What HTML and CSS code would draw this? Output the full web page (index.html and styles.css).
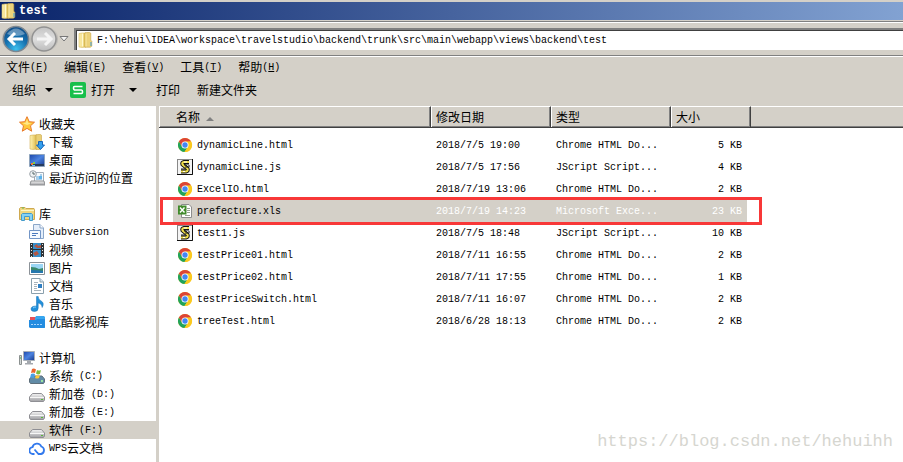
FILE: index.html
```html
<!DOCTYPE html>
<html lang="zh-CN">
<head>
    <meta charset="utf-8">
    <title>test</title>
    <meta name="viewport" content="width=device-width, initial-scale=1">
    <link rel="stylesheet" href="styles.css">
</head>
<body>
    <!-- shared icons -->
    <svg class="sprite" aria-hidden="true">
        <defs>
            <linearGradient id="gold" x1="0" x2="1"><stop offset="0" stop-color="#fff3b4"/><stop offset=".5" stop-color="#efd67c"/><stop offset="1" stop-color="#d9b544"/></linearGradient>
            <linearGradient id="steel" x1="0" y1="0" x2="0" y2="1"><stop offset="0" stop-color="#f4f4f4"/><stop offset="1" stop-color="#a0a0a4"/></linearGradient>
            <linearGradient id="sky" x1="0" y1="0" x2="1" y2="1"><stop offset="0" stop-color="#1c46a8"/><stop offset=".5" stop-color="#4c83e0"/><stop offset="1" stop-color="#16368a"/></linearGradient>
            <radialGradient id="blueball" cx=".5" cy=".9" r=".9"><stop offset="0" stop-color="#3fc0ee"/><stop offset=".5" stop-color="#1672b0"/><stop offset="1" stop-color="#0d4a86"/></radialGradient>
            <linearGradient id="greyball" x1="0" y1="0" x2="0" y2="1"><stop offset="0" stop-color="#c4c4c4"/><stop offset=".5" stop-color="#dedede"/><stop offset="1" stop-color="#bcbcbc"/></linearGradient>
        </defs>
        <symbol id="folder" viewBox="0 0 16 16">
            <path d="M1 1.500L4 1h4v14l-4 .5-3-.5z" fill="url(#gold)" stroke="#dcc069" stroke-width=".6"/>
            <path d="M7 .8l4.500-.5 1.300.9v7l1 1v5l-1.500 1H7z" fill="#ecd27a" stroke="#c9a545" stroke-width=".6"/>
            <path d="M4.500 1.500v13" stroke="#fff8d0" stroke-width="1.500"/>
            <path d="M8 1.500v13" stroke="#f8e8a6"/>
            <path d="M13 10v4" stroke="#3a9bd8"/>
        </symbol>
        <symbol id="star" viewBox="0 0 16 16">
            <path d="M8 .7l2.200 5 5.300.5-4 3.600 1.200 5.400L8 12.400l-4.700 2.800 1.200-5.400-4-3.600 5.300-.5z" fill="#ffc83c" stroke="#e8792b"/>
            <path d="M8 3l1.300 4 3.200.2L8 9 3.500 7l3.200-.2z" fill="#ffe889"/>
        </symbol>
        <symbol id="download" viewBox="0 0 16 16">
            <path d="M1 1.500L4 1h4v14l-4 .5-3-.5z" fill="url(#gold)" stroke="#d3b050" stroke-width=".6"/>
            <path d="M7 .8l4-.5 1.500.9v13L11 15.500H7z" fill="#e9cf76" stroke="#c9a545" stroke-width=".6"/>
            <path d="M9.500 7.500h4V11h2L11.500 15.500 7.500 11h2z" fill="#35a0ee" stroke="#1765b8"/>
        </symbol>
        <symbol id="desktop" viewBox="0 0 16 16">
            <path d="M.5 2.500h15v12H.5z" fill="url(#sky)" stroke="#8fa4bd"/>
            <path d="M1 12h14v2H1z" fill="#273c5e"/>
            <path d="M2 11h2v2H2z" fill="#f27a35"/><path d="M4 10h2v2H4z" fill="#82ce45"/><path d="M3 13h3v1H3z" fill="#61c5ff"/>
        </symbol>
        <symbol id="recent" viewBox="0 0 16 16">
            <path d="M5.500 2.500h9v9h-9z" fill="#f7fafc" stroke="#a3adb8"/>
            <path d="M2 11h13l1 4H1z" fill="url(#steel)" stroke="#8d8f92"/>
            <path d="M7 7h3M11 5h2M7 9h6" stroke="#58a2d8"/><path d="M10 6h3v3h-3z" fill="#5ab2ec"/>
            <circle cx="4" cy="4" r="3.300" fill="#eef2f4" stroke="#9aa1a8"/><path d="M4 2v2h2" fill="none" stroke="#566"/>
        </symbol>
        <symbol id="library" viewBox="0 0 16 16">
            <path d="M.5 13.500v-11l1-1H6l1 1h8l.5 1v10z" fill="#f0d780" stroke="#cfa950"/>
            <path d="M2 4.500h13" stroke="#fff6c4"/><path d="M3 2h2" stroke="#62b957"/>
            <path d="M2.500 14.500V8.500l1-1h9l1 1v6h-3v-4h-5v4z" fill="#85d2f5" stroke="#459bc9"/>
        </symbol>
        <symbol id="svn" viewBox="0 0 16 16">
            <path d="M4.500.5H11L14.500 4v10.500h-10z" fill="#e4eefa" stroke="#8ba6c8"/>
            <path d="M11 .5V4h3.500" fill="#fff" stroke="#8ba6c8"/>
            <path d="M.5 6.500h11v8H.5z" fill="#f6faff" stroke="#7295c6"/>
            <path d="M3 9.500h6M3 11.500h4" stroke="#4b79bd"/>
        </symbol>
        <symbol id="video" viewBox="0 0 16 16">
            <path d="M1 1h14v14H1z" fill="#303437"/>
            <path d="M4 1h8v6H4zM4 8h8v7H4z" fill="#378fcb"/>
            <path d="M5 4l3-2 1 2 3-1v3L8 6zM4 11l4-2 2 3-4 2z" fill="#b65742"/>
            <path d="M2.500 2v13M13.500 2v13" stroke="#e6e6e6" stroke-dasharray="1 2"/>
        </symbol>
        <symbol id="photo" viewBox="0 0 16 16">
            <path d="M.5 2.500h15v12H.5z" fill="#fff" stroke="#8c9298"/>
            <path d="M2 4h12v9H2z" fill="#9bd6f5"/><path d="M2 7q5 0 8 2l4-1v3H2z" fill="#39886c"/><path d="M2 10q7 0 12 1v2H2z" fill="#2677ae"/>
        </symbol>
        <symbol id="doc" viewBox="0 0 16 16">
            <path d="M2.500.5H11L14.500 4v11.500h-12z" fill="#fff" stroke="#8ba0ad"/>
            <path d="M11 .5V4h3.500" fill="#d4e5f1" stroke="#8ba0ad"/>
            <path d="M5 4.500h4M5 6.500h3M5 8.500h3M5 10.500h3M5 12.500h7" stroke="#a8b3bb"/><path d="M9 6h4v4H9z" fill="#307fc3"/>
        </symbol>
        <symbol id="music" viewBox="0 0 16 16">
            <path d="M7.500.5h1.700q0 3 3 4.500 3.500 2 1 6.500Q13 7.500 9.200 7v5q0 3.500-3.700 3.500-3.500 0-3.500-2.500 0-3 5.500-3z" fill="#2190db" stroke="#1670b5" stroke-width=".5"/>
            <path d="M4 12q1-1 3-1" stroke="#86d2ff" fill="none"/>
        </symbol>
        <symbol id="youku" viewBox="0 0 16 16">
            <path d="M1 3h7v6H1z" fill="#e3515a"/>
            <path d="M6 4l1-2h8l1 1v11H6z" fill="#37a6ef"/>
            <path d="M0 6h7l1-1h8v8l-1 1H1l-1-1z" fill="#238ce0"/>
            <path d="M2 10.500h12" stroke="#a4d5ff" stroke-dasharray="2 1"/>
        </symbol>
        <symbol id="computer" viewBox="0 0 16 16">
            <path d="M4.500 1.500h11v9h-11z" fill="url(#sky)" stroke="#aab0b8"/>
            <path d="M8 11h4v2h2v1.500H6V13h2z" fill="#a4a8ae"/>
            <path d="M.5 5.500h2v9h-2z" fill="#d4d8d8" stroke="#8b9190"/><path d="M1 8h1" stroke="#38b638"/>
        </symbol>
        <symbol id="disk" viewBox="0 0 16 16">
            <path d="M3.500 7.500h9l3 3.500v3l-1 1.500h-13l-1-1.500v-3z" fill="url(#steel)" stroke="#8f8f94"/>
            <path d="M1 11.500h14" stroke="#f7f7f7"/><path d="M12 13h2v1h-2z" fill="#58b838"/>
        </symbol>
        <symbol id="sysdisk" viewBox="0 0 16 16">
            <path d="M3 8h10l2.500 3v3l-1 1.500h-13l-1-1.500v-3z" fill="#628ba6" stroke="#5e6f7b"/>
            <path d="M3 1q2-1 4 .5L6 5Q4 4 2 5z" fill="#e9652d"/><path d="M8 2q2 1 4 0l-1 4q-2 1-4-.5z" fill="#7dbc3b"/>
            <path d="M2 6q2-1 4 0L5 10Q3 9 1 10z" fill="#48a0e6"/><path d="M7 7q2 1 4 0l-1 3q-2 1-4 0z" fill="#ffc936"/>
            <path d="M12 12h2v2h-2z" fill="#98e4a1"/>
        </symbol>
        <symbol id="cloud" viewBox="0 0 16 16">
            <path d="M5.500 14H4A3.400 3.400 0 0 1 3.500 7.200 4.600 4.600 0 0 1 12.300 6.500 3.900 3.900 0 0 1 12 14H9.500L5.500 9.500" fill="none" stroke="#3279ed" stroke-width="1.800"/>
        </symbol>
        <symbol id="chrome" viewBox="0 0 16 16">
            <circle cx="8" cy="8" r="7" fill="#fbc91e"/>
            <path d="M1.900 4.500A7 7 0 0 1 14.100 4.500L8 5 5 9.700z" fill="#dc4437"/>
            <path d="M1.900 4.500A7 7 0 0 0 7.500 15L11 9.700 5 9.700z" fill="#20a35b"/>
            <path d="M14.100 4.500H8l3 5.200L7.500 15A7 7 0 0 0 14.100 4.500z" fill="#fbc91e"/>
            <circle cx="8" cy="8" r="3.500" fill="#fff"/><circle cx="8" cy="8" r="2.700" fill="#4286f4"/>
        </symbol>
        <symbol id="script" viewBox="0 0 16 16">
            <path d="M0 0h16v16H0z" fill="#888"/><path d="M1 1h14v14H1z" fill="#f4f4f4"/><path d="M15.500 0v15.500H0" fill="none" stroke="#111"/>
            <path d="M12 3H7Q4.500 3.500 5.500 5.500L10.500 9.500Q11.500 12 9 12.500H4" fill="none" stroke="#111" stroke-width="4"/>
            <path d="M12 3H7Q4.500 3.500 5.500 5.500L10.500 9.500Q11.500 12 9 12.500H4" fill="none" stroke="#f2e04c" stroke-width="2"/>
            <path d="M7 3h3M6 12.500h2" stroke="#fff"/>
            <path d="M10 5h2M7 6h3M8 8h3M4 10h4M11 7h2" stroke="#111"/>
        </symbol>
        <symbol id="excel" viewBox="0 0 16 16">
            <path d="M4.500 1.500h7.500l2.500 2.500v10.500h-10z" fill="#fff" stroke="#8d8d8d"/>
            <path d="M10 5.500h3M10 7.500h3M10 9.500h3M8 12.500h5" stroke="#97a292"/>
            <path d="M1 2.500h8.500v9H1z" fill="#418b2b"/><path d="M3 4.500l4.500 5M7.500 4.500L3 9.500" stroke="#fff" stroke-width="1.400"/>
        </symbol>
    </svg>

    <header class="titlebar">
        <svg class="icon"><use href="#folder"/></svg>
        <h1>test</h1>
    </header>

    <div class="navbar">
        <div class="history">
            <button type="button" aria-label="后退">
                <svg viewBox="0 0 28 28"><circle cx="14" cy="14" r="12.500" fill="url(#blueball)" stroke="#7d8790" stroke-width="1.500"/><path d="M5 9Q14-2 23 9 14 13 5 9z" fill="#fff" opacity=".35"/><path d="M13 8l-6 6 6 6M8 14h13" fill="none" stroke="#fff" stroke-width="3"/></svg>
            </button>
            <button type="button" aria-label="前进">
                <svg viewBox="0 0 28 28"><circle cx="14" cy="14" r="12" fill="url(#greyball)" stroke="#929292" stroke-width="1.500"/><path d="M15 8l6 6-6 6M20 14H7" fill="none" stroke="#f4f4f4" stroke-width="3"/></svg>
            </button>
        </div>
        <button type="button" class="recent" aria-label="最近的页面">
            <svg viewBox="0 0 10 8"><path d="M1 1.500h8L5 6z" fill="#f4f4f4" stroke="#777"/></svg>
        </button>
        <label class="address">
            <svg class="icon"><use href="#folder"/></svg>
            <input type="text" aria-label="地址" value="F:\hehui\IDEA\workspace\travelstudio\backend\trunk\src\main\webapp\views\backend\test">
        </label>
    </div>

    <nav class="menubar">
        <button type="button">文件<span class="en">(<u>F</u>)</span></button>
        <button type="button">编辑<span class="en">(<u>E</u>)</span></button>
        <button type="button">查看<span class="en">(<u>V</u>)</span></button>
        <button type="button">工具<span class="en">(<u>T</u>)</span></button>
        <button type="button">帮助<span class="en">(<u>H</u>)</span></button>
    </nav>

    <div class="toolbar">
        <button type="button">组织<i class="caret"></i></button>
        <button type="button" class="open">
            <svg class="icon" viewBox="0 0 16 16"><rect width="16" height="16" rx="2" fill="#18bf4b"/><path d="M12.500 4.500h-8Q3.500 4.500 3.500 6t1 2h7q1 0 1 1.800t-1 1.700h-8" fill="none" stroke="#fff" stroke-width="1.600"/></svg>
            打开<i class="caret"></i>
        </button>
        <button type="button">打印</button>
        <button type="button">新建文件夹</button>
    </div>

    <div class="explorer">
        <aside class="sidebar">
            <section>
                <a href="#" class="root"><svg class="icon"><use href="#star"/></svg>收藏夹</a>
                <a href="#"><svg class="icon"><use href="#download"/></svg>下载</a>
                <a href="#"><svg class="icon"><use href="#desktop"/></svg>桌面</a>
                <a href="#"><svg class="icon"><use href="#recent"/></svg>最近访问的位置</a>
            </section>
            <section>
                <a href="#" class="root"><svg class="icon"><use href="#library"/></svg>库</a>
                <a href="#"><svg class="icon"><use href="#svn"/></svg><span class="en">Subversion</span></a>
                <a href="#"><svg class="icon"><use href="#video"/></svg>视频</a>
                <a href="#"><svg class="icon"><use href="#photo"/></svg>图片</a>
                <a href="#"><svg class="icon"><use href="#doc"/></svg>文档</a>
                <a href="#"><svg class="icon"><use href="#music"/></svg>音乐</a>
                <a href="#"><svg class="icon"><use href="#youku"/></svg>优酷影视库</a>
            </section>
            <section>
                <a href="#" class="root"><svg class="icon"><use href="#computer"/></svg>计算机</a>
                <a href="#"><svg class="icon"><use href="#sysdisk"/></svg>系统<span class="en"> (C:)</span></a>
                <a href="#"><svg class="icon"><use href="#disk"/></svg>新加卷<span class="en"> (D:)</span></a>
                <a href="#"><svg class="icon"><use href="#disk"/></svg>新加卷<span class="en"> (E:)</span></a>
                <a href="#" class="current"><svg class="icon"><use href="#disk"/></svg>软件<span class="en"> (F:)</span></a>
                <a href="#"><svg class="icon"><use href="#cloud"/></svg><span class="en">WPS</span>云文档</a>
            </section>
        </aside>

        <main class="files">
            <table>
                <colgroup>
                    <col class="col-name"><col class="col-date"><col class="col-type"><col class="col-size"><col>
                </colgroup>
                <thead>
                    <tr><th>名称<i class="sort"></i></th><th>修改日期</th><th>类型</th><th>大小</th><th></th></tr>
                </thead>
                <tbody>
                    <tr><td><a href="#"><svg class="icon"><use href="#chrome"/></svg>dynamicLine.html</a></td><td>2018/7/5 19:00</td><td>Chrome HTML Do...</td><td>5 KB</td><td></td></tr>
                    <tr><td><a href="#"><svg class="icon"><use href="#script"/></svg>dynamicLine.js</a></td><td>2018/7/5 17:56</td><td>JScript Script...</td><td>4 KB</td><td></td></tr>
                    <tr><td><a href="#"><svg class="icon"><use href="#chrome"/></svg>ExcelIO.html</a></td><td>2018/7/19 13:06</td><td>Chrome HTML Do...</td><td>2 KB</td><td></td></tr>
                    <tr class="selected"><td><a href="#"><svg class="icon"><use href="#excel"/></svg>prefecture.xls</a><span class="mark"></span></td><td>2018/7/19 14:23</td><td>Microsoft Exce...</td><td>23 KB</td><td></td></tr>
                    <tr><td><a href="#"><svg class="icon"><use href="#script"/></svg>test1.js</a></td><td>2018/7/5 18:48</td><td>JScript Script...</td><td>10 KB</td><td></td></tr>
                    <tr><td><a href="#"><svg class="icon"><use href="#chrome"/></svg>testPrice01.html</a></td><td>2018/7/11 16:55</td><td>Chrome HTML Do...</td><td>2 KB</td><td></td></tr>
                    <tr><td><a href="#"><svg class="icon"><use href="#chrome"/></svg>testPrice02.html</a></td><td>2018/7/11 17:55</td><td>Chrome HTML Do...</td><td>1 KB</td><td></td></tr>
                    <tr><td><a href="#"><svg class="icon"><use href="#chrome"/></svg>testPriceSwitch.html</a></td><td>2018/7/11 16:07</td><td>Chrome HTML Do...</td><td>2 KB</td><td></td></tr>
                    <tr><td><a href="#"><svg class="icon"><use href="#chrome"/></svg>treeTest.html</a></td><td>2018/6/28 18:13</td><td>Chrome HTML Do...</td><td>2 KB</td><td></td></tr>
                </tbody>
            </table>
            <p class="watermark">https://blog.csdn.net/hehuihh</p>
        </main>
    </div>
</body>
</html>
```

FILE: styles.css
```css
* {
    box-sizing: border-box;
}

body {
    margin: 0;
    min-height: 100vh;
    display: flex;
    flex-direction: column;
    background: #d4d0c8;
    color: #000;
    font-family: "Noto Sans CJK SC", sans-serif;
    font-size: 12px;
    line-height: 18px;
}

button {
    display: flex;
    align-items: center;
    padding: 0;
    border: none;
    background: none;
    color: inherit;
    font: inherit;
}

a {
    color: inherit;
    text-decoration: none;
}

.sprite {
    position: absolute;
    width: 0;
    height: 0;
}

.icon {
    flex: none;
    width: 16px;
    height: 16px;
}

.en {
    padding-top: 2px;
    font-family: "Liberation Mono", monospace;
    font-size: 10px;
    line-height: 16px;
    white-space: pre;
}

/* title */
.titlebar {
    display: flex;
    align-items: center;
    gap: 2px;
    height: 18px;
    margin: 2px 0 1px;
    padding-left: 1px;
    background: linear-gradient(to right, #0a246a, #82a2d2);
}

.titlebar h1 {
    margin: 0;
    color: #fff;
    font: bold 12px "Liberation Mono", monospace;
}

/* history buttons and path */
.navbar {
    display: flex;
    align-items: center;
    height: 36px;
    border-top: 1px solid #808080;
    border-bottom: 1px solid #fff;
    box-shadow: inset 0 1px #fff, inset 0 -1px #808080;
}

.history {
    display: flex;
    margin-left: 2px;
    border-radius: 14px;
    background: linear-gradient(#d4d0c8 10%, #b8b6b2 50%, #d4d0c8 90%);
}

.history svg {
    display: block;
    width: 28px;
    height: 28px;
}

.recent svg {
    width: 10px;
    height: 8px;
}

.recent {
    margin: 0 5px 0 1px;
}

.address {
    display: flex;
    flex: 1;
    align-items: center;
    gap: 3px;
    height: 22px;
    padding-left: 2px;
    border-top: 2px solid #808080;
    border-left: 2px solid #808080;
    background: #fff;
    box-shadow: inset 1px 1px #404040;
}

.address input {
    flex: 1;
    padding: 0;
    border: none;
    outline: none;
    background: none;
    font: 10px "Liberation Mono", monospace;
}

/* menus */
.menubar {
    display: flex;
    gap: 16px;
    height: 19px;
    padding-left: 6px;
}

.toolbar {
    display: flex;
    gap: 17px;
    height: 30px;
    padding: 0 12px 2px;
}

.toolbar .open {
    gap: 5px;
    margin-right: 2px;
}

.open .caret {
    margin-left: 9px;
}

.caret {
    margin-left: 9px;
    border: 4px solid transparent;
    border-top-color: #000;
    border-bottom: none;
}

/* folders */
.explorer {
    display: flex;
    flex: 1;
}

.sidebar {
    width: 159px;
    padding-top: 9px;
    border-right: 3px solid #d4d0c8;
    background: #fff;
}

.sidebar section {
    margin-bottom: 18px;
}

.sidebar section:last-child {
    margin-bottom: 0;
}

.sidebar a {
    display: flex;
    align-items: center;
    height: 18px;
    padding-left: 29px;
}

.sidebar .icon {
    margin-right: 4px;
}

.sidebar .root {
    padding-left: 19px;
}

.sidebar .current {
    background: #d4d0c8;
}

/* file list */
.files {
    display: flex;
    flex: 1;
    flex-direction: column;
    justify-content: space-between;
    background: #fff;
}

table {
    width: 100%;
    table-layout: fixed;
    border-spacing: 0;
}

.col-name {
    width: 272px;
}

.col-date,
.col-type {
    width: 120px;
}

.col-size {
    width: 80px;
}

th {
    height: 22px;
    padding: 0 5px;
    border: 1px solid #404040;
    border-top-color: #fff;
    border-left: none;
    background: #d4d0c8;
    box-shadow: inset 1px 0 #fff, inset -1px -1px #808080;
    font-weight: normal;
    line-height: 20px;
    text-align: left;
}

th:first-child {
    padding-left: 17px;
}

th:last-child {
    border-right: none;
    box-shadow: inset 0 -1px #808080;
}

.sort {
    display: inline-block;
    margin-left: 6px;
    border: 4px solid transparent;
    border-bottom-color: #808080;
    border-top: none;
    vertical-align: middle;
}

/* space between the headings and the first file */
tbody::before {
    content: "";
    display: table-row;
    height: 6px;
}

td {
    height: 22px;
    padding: 0 5px;
    font: 10px "Liberation Mono", monospace;
    white-space: nowrap;
}

td:first-child {
    padding-left: 4px;
    border-left: 14px solid #fff;
}

td:nth-child(4) {
    border-right: 4px solid #fff;
    text-align: right;
}

td a {
    display: flex;
    align-items: center;
    gap: 4px;
}

.selected {
    position: relative;
    z-index: 1;
}

.selected td {
    background: #d4d0c8;
    color: #fff;
}

.selected td:last-child {
    background: #fff;
}

.selected a {
    color: #000;
}

.mark {
    position: absolute;
    z-index: 1;
    top: -3px;
    left: 1px;
    width: 602px;
    height: 28px;
    border: 3px solid #f83838;
}

.watermark {
    margin: 0 10px 8px;
    color: #d6d6d0;
    font: 17px/24px "Liberation Mono", monospace;
    text-align: right;
}
```
